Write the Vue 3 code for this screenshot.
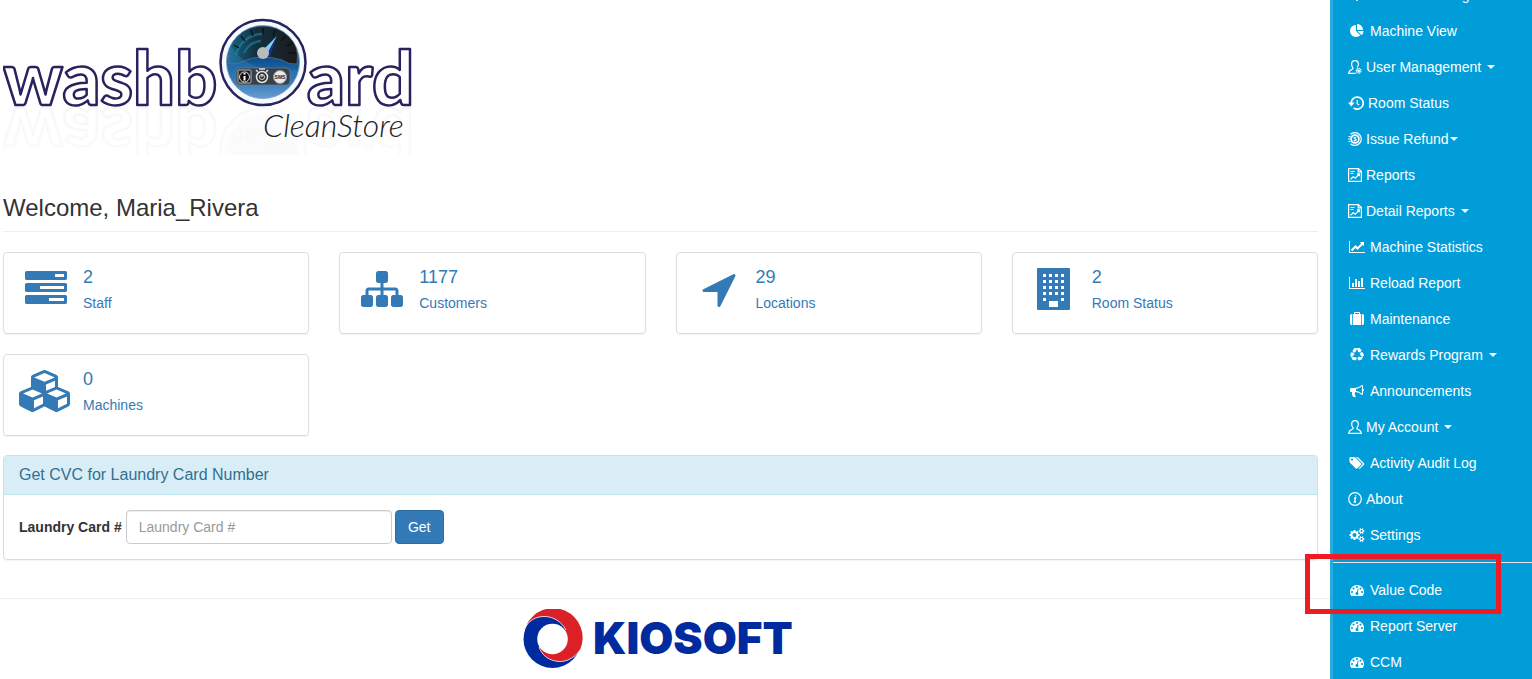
<script setup>
import { ref } from 'vue'

const cardNumber = ref('')

const stats = [
  { icon: 'tasks', value: '2', label: 'Staff' },
  { icon: 'sitemap', value: '1177', label: 'Customers' },
  { icon: 'arrow', value: '29', label: 'Locations' },
  { icon: 'building', value: '2', label: 'Room Status' },
  { icon: 'cubes', value: '0', label: 'Machines' },
]

const statIcons = {
  tasks: { box: '0 0 1792 1792', w: 42, d: 'M1024 1408h640v-128h-640v128zm-384-512h1024v-128h-1024v128zm640-512h384v-128h-384v128zm512 832v256q0 26-19 45t-45 19h-1664q-26 0-45-19t-19-45v-256q0-26 19-45t45-19h1664q26 0 45 19t19 45zm0-512v256q0 26-19 45t-45 19h-1664q-26 0-45-19t-19-45v-256q0-26 19-45t45-19h1664q26 0 45 19t19 45zm0-512v256q0 26-19 45t-45 19h-1664q-26 0-45-19t-19-45v-256q0-26 19-45t45-19h1664q26 0 45 19t19 45z' },
  sitemap: { box: '0 0 1792 1792', w: 42, d: 'M1792 1248v320q0 40-28 68t-68 28h-320q-40 0-68-28t-28-68v-320q0-40 28-68t68-28h96v-192h-512v192h96q40 0 68 28t28 68v320q0 40-28 68t-68 28h-320q-40 0-68-28t-28-68v-320q0-40 28-68t68-28h96v-192h-512v192h96q40 0 68 28t28 68v320q0 40-28 68t-68 28h-320q-40 0-68-28t-28-68v-320q0-40 28-68t68-28h96v-192q0-52 38-90t90-38h512v-192h-96q-40 0-68-28t-28-68v-320q0-40 28-68t68-28h320q40 0 68 28t28 68v320q0 40-28 68t-68 28h-96v192h512q52 0 90 38t38 90v192h96q40 0 68 28t28 68z' },
  arrow: { box: '0 0 1792 1792', w: 42, d: 'M1593 349l-640 1280q-17 35-57 35-5 0-15-2-22-5-35.500-22.500t-13.500-39.500v-576h-576q-22 0-39.500-13.500t-22.500-35.500 4-42 29-30l1280-640q13-7 29-7 27 0 45 19 15 14 18.500 34.500t-6.500 39.500z' },
  building: { box: '1 0 42 42', w: 42, d: 'M5 0h31q1 0 1 1v40q0 1-1 1H5q-1 0-1-1V1q0-1 1-1zM10 6v3h3v-3zM16 6v3h3v-3zM22 6v3h3v-3zM28 6v3h3v-3zM10 12v3h3v-3zM16 12v3h3v-3zM22 12v3h3v-3zM28 12v3h3v-3zM10 18v3h3v-3zM16 18v3h3v-3zM22 18v3h3v-3zM28 18v3h3v-3zM10 24v3h3v-3zM16 24v3h3v-3zM22 24v3h3v-3zM28 24v3h3v-3zM10 30v3h3v-3zM28 30v3h3v-3zM16 33v6h9v-6z' },
  cubes: { box: '0 0 2176 1792', w: 51, d: 'M640 1632l384-192v-314l-384 164v342zm-64-454l404-173-404-173-404 173zm1088 454l384-192v-314l-384 164v342zm-64-454l404-173-404-173-404 173zm-448-293l384-165v-266l-384 164v267zm-64-379l441-189-441-189-441 189zm1088 518v416q0 36-19 67t-52 47l-448 224q-25 14-57 14t-57-14l-448-224q-4-2-7-4-2 2-7 4l-448 224q-25 14-57 14t-57-14l-448-224q-33-16-52-47t-19-67v-416q0-38 21.500-70t56.500-48l434-186v-400q0-38 21.500-70t56.500-48l448-192q23-10 50-10t50 10l448 192q35 16 56.500 48t21.500 70v400l434 186q36 16 57 48t21 70z' },
}

const gauge = 'M384 1152q0-53-37.500-90.500t-90.500-37.500-90.500 37.500-37.500 90.500 37.500 90.500 90.500 37.500 90.500-37.500 37.500-90.500zm192-448q0-53-37.500-90.500t-90.500-37.500-90.500 37.500-37.500 90.500 37.500 90.500 90.500 37.500 90.500-37.500 37.500-90.500zm428 481l101-382q6-26-7.500-48.500t-38.500-29.500-48 6.500-30 39.500l-101 382q-60 5-107 43.500t-63 98.500q-20 77 20 146t117 89 146-20 89-117q16-60-6-117t-72-91zm660-33q0-53-37.500-90.500t-90.500-37.500-90.500 37.500-37.500 90.500 37.500 90.500 90.500 37.500 90.500-37.500 37.500-90.500zm-640-640q0-53-37.500-90.500t-90.500-37.500-90.500 37.500-37.500 90.500 37.500 90.500 90.500 37.500 90.500-37.500 37.500-90.500zm448 192q0-53-37.500-90.500t-90.500-37.500-90.500 37.500-37.500 90.500 37.500 90.500 90.500 37.500 90.500-37.500 37.500-90.500zm320 448q0 261-141 483-19 29-54 29h-1402q-35 0-54-29-141-221-141-483 0-182 71-348t191-286 286-191 348-71 348 71 286 191 191 286 71 348z'

// Solid glyphs, 1792 units tall; w is the glyph's width in the same units
const glyphs = {
  marker: { w: 1024, d: 'M768 640q0-106-75-181t-181-75-181 75-75 181 75 181 181 75 181-75 75-181zm256 0q0 109-33 179l-364 774q-16 33-47.500 52t-67.500 19-67.500-19-46.500-52l-365-774q-33-70-33-179 0-212 150-362t362-150 362 150 150 362z' },
  pie: { w: 1792, d: 'M768 890l546 546q-106 108-247.500 168t-298.500 60q-209 0-385.500-103t-279.500-279.500-103-385.500 103-385.500 279.500-279.500 385.500-103v762zm187 6h773q0 157-60 298.500t-168 247.500zm709-128h-768v-768q209 0 385.500 103t279.500 279.500 103 385.500z' },
  line: { w: 2048, d: 'M2048 1536v128h-2048v-1536h128v1408h1920zm-128-1248v435q0 21-19.500 29.500t-35.500-7.500l-121-121-633 633q-10 10-23 10t-23-10l-233-233-416 416-192-192 585-585q10-10 23-10t23 10l233 233 464-464-121-121q-16-16-7.500-35.500t29.500-19.500h435q14 0 23 9t9 23z' },
  bars: { w: 2048, d: 'M640 896v512h-256v-512h256zm384-512v1024h-256v-1024h256zm1024 1152v128h-2048v-1536h128v1408h1920zm-640-896v768h-256v-768h256zm384-384v1152h-256v-1152h256z' },
  suitcase: { w: 1792, d: 'M640 256h512v-128h-512v128zm-352 0v1408h-64q-92 0-158-66t-66-158v-960q0-92 66-158t158-66h64zm1120 0v1408h-1024v-1408h128v-160q0-40 28-68t68-28h576q40 0 68 28t28 68v160h128zm384 224v960q0 92-66 158t-158 66h-64v-1408h64q92 0 158 66t66 158z' },
  recycle: { w: 1792, d: 'M836 1169l-15 368-2 22-420-29q-36-3-67-31.500t-47-65.500q-11-27-14.500-55t4-65 12-55 21.500-64 19-53q78 12 509 28zm-387-586l180 379-147-92q-63 72-111.500 144.500t-72.500 125-39.500 94.500-18.500 63l-4 21-190-357q-17-26-18-56t6-47l8-18q35-63 114-188l-140-86zm1231 517l-188 359q-12 29-36.500 46.500t-43.500 20.500l-18 4q-71 7-219 12l8 164-230-367 211-362 7 173q170 16 283 5t170-33zm-785-924q-47 63-265 435l-317-187-19-12 225-356q20-31 60-45t80-10q24 2 48.500 12t42 21 41.500 33 36 34.500 36 39.500 32 35zm655 307l212 363q18 37 12.500 76t-27.500 74q-13 20-33 37t-38 28-48.500 22-47 16-51.500 14-46 12q-34-72-265-436l313-195zm-143-226l142-83-220 373-419-20 151-86q-34-89-75-166t-75.500-123.500-64.500-80-47-46.500l-17-13 405 1q31-3 58 10.500t39 28.500l11 15q39 61 112 190z' },
  bullhorn: { w: 1792, d: 'M1664 640q53 0 90.500 37.500t37.500 90.500-37.500 90.500-90.500 37.500v384q0 52-38 90t-90 38q-417-347-812-380-58 19-91 66t-31 100.500 40 92.500q-20 33-23 65.500t6 58 33.500 55 48 50 61.500 50.500q-29 58-111.500 83t-168.500 11.500-132-55.500q-7-23-29.500-87.500t-32-94.500-23-89-15-101 3.500-98.500 22-110.500h-122q-66 0-113-47t-47-113v-192q0-66 47-113t113-47h480q435 0 896-384 52 0 90 38t38 90v384zm-128 604v-954q-394 302-768 343v270q377 42 768 341z' },
  tags: { w: 1920, d: 'M448 448q0-53-37.500-90.500t-90.500-37.500-90.500 37.500-37.500 90.500 37.500 90.500 90.500 37.500 90.500-37.500 37.500-90.500zm1067 576q0 53-37 90l-491 492q-39 37-91 37-53 0-90-37l-715-716q-38-37-64.500-101t-26.500-117v-416q0-52 38-90t90-38h416q53 0 117 26.500t102 64.500l715 714q37 39 37 91zm384 0q0 53-37 90l-491 492q-39 37-91 37-36 0-59-14t-53-45l470-470q37-37 37-90 0-52-37-91l-715-714q-38-38-102-64.500t-117-26.500h224q53 0 117 26.500t102 64.500l715 714q37 39 37 91z' },
  cogs: { w: 1920, d: 'M896 896q0-106-75-181t-181-75-181 75-75 181 75 181 181 75 181-75 75-181zm768 512q0-52-38-90t-90-38-90 38-38 90q0 53 37.500 90.500t90.500 37.500 90.500-37.500 37.500-90.500zm0-1024q0-52-38-90t-90-38-90 38-38 90q0 53 37.500 90.500t90.500 37.500 90.500-37.500 37.500-90.500zm-384 421v185q0 10-7 19.500t-16 10.500l-155 24q-11 35-32 76 34 48 90 115 7 11 7 20 0 12-7 19-23 30-82.500 89.500t-78.500 59.500q-11 0-21-7l-115-90q-37 19-77 31-11 108-23 155-7 24-30 24h-186q-11 0-20-7.500t-10-17.500l-23-153q-34-10-75-31l-118 89q-7 7-20 7-11 0-21-8-144-133-144-160 0-9 7-19 10-14 41-53t47-61q-23-44-35-82l-152-24q-10-1-17-9.500t-7-19.500v-185q0-10 7-19.500t16-10.500l155-24q11-35 32-76-34-48-90-115-7-11-7-20 0-12 7-20 22-30 82-89t79-59q11 0 21 7l115 90q34-18 77-32 11-108 23-154 7-24 30-24h186q11 0 20 7.500t10 17.500l23 153q34 10 75 31l118-89q8-7 20-7 11 0 21 8 144 133 144 160 0 8-7 19-12 16-42 54t-45 60q23 48 34 82l152 23q10 2 17 10.500t7 19.500zm640 533v140q0 16-149 31-12 27-30 52 51 113 51 138 0 4-4 7-122 71-124 71-8 0-46-47t-52-68q-20 2-30 2t-30-2q-14 21-52 68t-46 47q-2 0-124-71-4-3-4-7 0-25 51-138-18-25-30-52-149-15-149-31v-140q0-16 149-31 13-29 30-52-51-113-51-138 0-4 4-7 4-2 35-20t59-34 30-16q8 0 46 46.500t52 67.500q20-2 30-2t30 2q51-71 92-112l6-2q4 0 124 70 4 3 4 7 0 25-51 138 17 23 30 52 149 15 149 31zm0-1024v140q0 16-149 31-12 27-30 52 51 113 51 138 0 4-4 7-122 71-124 71-8 0-46-47t-52-68q-20 2-30 2t-30-2q-14 21-52 68t-46 47q-2 0-124-71-4-3-4-7 0-25 51-138-18-25-30-52-149-15-149-31v-140q0-16 149-31 13-29 30-52-51-113-51-138 0-4 4-7 4-2 35-20t59-34 30-16q8 0 46 46.500t52 67.500q20-2 30-2t30 2q51-71 92-112l6-2q4 0 124 70 4 3 4 7 0 25-51 138 17 23 30 52 149 15 149 31z' },
  gauge: { w: 1792, d: gauge },
}

const mainMenu = [
  { glyph: 'marker', label: 'Location Management' },
  { glyph: 'pie', label: 'Machine View' },
  { line: 'userCog', label: 'User Management', caret: true },
  { line: 'history', label: 'Room Status' },
  { line: 'refund', label: 'Issue Refund', caret: true, tight: true },
  { line: 'report', label: 'Reports' },
  { line: 'report', label: 'Detail Reports', caret: true },
  { glyph: 'line', label: 'Machine Statistics' },
  { glyph: 'bars', label: 'Reload Report' },
  { glyph: 'suitcase', label: 'Maintenance' },
  { glyph: 'recycle', label: 'Rewards Program', caret: true },
  { glyph: 'bullhorn', label: 'Announcements' },
  { line: 'user', label: 'My Account', caret: true },
  { glyph: 'tags', label: 'Activity Audit Log' },
  { line: 'info', label: 'About' },
  { glyph: 'cogs', label: 'Settings' },
]

const serverMenu = [
  { glyph: 'gauge', label: 'Value Code', marked: true },
  { glyph: 'gauge', label: 'Report Server' },
  { glyph: 'gauge', label: 'CCM' },
]

const groups = [mainMenu, serverMenu]
</script>

<template>
  <div class="page">
    <main class="content">
      <div class="inner">
        <svg class="brand" width="420" height="160" viewBox="3 0 420 160" role="img" aria-label="washboard CleanStore">
          <defs>
            <linearGradient id="dial" x1="0" y1="0" x2="0" y2="1">
              <stop offset="0" stop-color="#123f68" />
              <stop offset=".45" stop-color="#0b4f8c" />
              <stop offset=".75" stop-color="#2f74b5" />
              <stop offset="1" stop-color="#7fa9d8" />
            </linearGradient>
            <linearGradient id="face" x1="0" y1="0" x2="1" y2="0">
              <stop offset="0" stop-color="#17668a" />
              <stop offset=".4" stop-color="#12303f" />
              <stop offset="1" stop-color="#1c1a1c" />
            </linearGradient>
            <linearGradient id="fade" x1="0" y1="0" x2="0" y2="1">
              <stop offset="0" stop-color="#fff" stop-opacity=".2" />
              <stop offset="1" stop-color="#fff" stop-opacity=".5" />
            </linearGradient>
            <clipPath id="below"><rect x="0" y="107" width="430" height="48" /></clipPath>
            <clipPath id="disc"><circle cx="263" cy="62" r="36" /></clipPath>
          </defs>
          <g id="wordmark">
            <text class="word" x="3" y="105">washb</text>
            <text class="word" x="307" y="105">ard</text>
            <circle cx="263" cy="62.500" r="42.500" fill="#f4fbfe" stroke="#28225f" stroke-width="2.500" />
            <circle cx="263" cy="62" r="36.500" fill="url(#dial)" stroke="#8aa0c4" />
            <g clip-path="url(#disc)">
              <path d="M229 64Q226 44 238 34Q250 26 263 26Q277 26 288 35Q300 45 297 64Q289 65 282 60Q272 57 263 57Q252 57 244 61Q236 65 229 64z" fill="url(#face)" stroke="#5c7486" stroke-width=".8" />
              <path d="M236 55A27 27 0 0 1 262 34M244 53A20 20 0 0 1 261 41" fill="none" stroke="#23859f" stroke-width="2.500" opacity=".6" />
              <path d="M263 28v6M251 30l2 6M241 36l4 5M234 45l5 3M275 30l-2 6M286 36l-5 5M293 43l-6 3M296 53l-7 0" stroke="#0a1016" stroke-width="1.300" />
              <path d="M226 36Q236 62 262 68L298 70V110H220z" fill="#3a86c4" opacity=".35" />
            </g>
            <path d="M277 36L262 51 266 56z" fill="#7fd0f4" />
            <path d="M277 36L266 56 270 57z" fill="#1b2f8e" />
            <circle cx="263" cy="53" r="6" fill="#b9bcbd" />
            <rect x="236" y="68" width="54" height="17" rx="4" fill="#37414b" stroke="#6f8292" stroke-width=".7" />
            <rect x="238" y="70" width="13" height="13" rx="1" fill="#222" stroke="#adb5bb" />
            <circle cx="244.500" cy="77" r="5" fill="#111" stroke="#ddd" />
            <path d="M244.500 73v1.500M244.500 76v4.500" stroke="#fff" stroke-width="2" />
            <circle cx="262" cy="77" r="5.500" fill="#333" stroke="#e5e5e5" stroke-width="1.500" />
            <path d="M259 69h6M256 70l2 2M268 70l-2 2" stroke="#ddd" stroke-width="1.500" />
            <circle cx="262" cy="77" r="2.500" fill="none" stroke="#ddd" />
            <path d="M262 74v3" stroke="#fff" />
            <circle cx="280" cy="77" r="6.500" fill="#e9e9e9" stroke="#999" />
            <text class="sms" x="280" y="79">SMS</text>
          </g>
          <g clip-path="url(#below)">
            <use href="#wordmark" transform="translate(0 213) scale(1 -1)" opacity=".035" />
            <rect x="0" y="107" width="430" height="48" fill="url(#fade)" />
          </g>
          <text class="sub" x="263" y="137">CleanStore</text>
        </svg>

        <h1 class="welcome">Welcome, Maria_Rivera</h1>

        <div class="cards">
          <a v-for="s in stats" :key="s.label" class="card" href="#">
            <span class="card-icon" :class="{ start: s.icon === 'cubes' }">
              <svg :width="statIcons[s.icon].w" height="42" :viewBox="statIcons[s.icon].box" aria-hidden="true">
                <path :d="statIcons[s.icon].d" fill="currentColor" fill-rule="evenodd" />
              </svg>
            </span>
            <span class="card-text">
              <span class="value">{{ s.value }}</span>
              <span>{{ s.label }}</span>
            </span>
          </a>
        </div>

        <section class="panel">
          <h2 class="panel-title">Get CVC for Laundry Card Number</h2>
          <form class="panel-body" @submit.prevent>
            <label for="card-number">Laundry Card #</label>
            <input id="card-number" v-model="cardNumber" type="text" placeholder="Laundry Card #" />
            <button type="submit">Get</button>
          </form>
        </section>
      </div>

      <footer class="footer">
        <svg width="276" height="60" viewBox="0 0 276 60" role="img" aria-label="KIOSOFT">
          <circle cx="29.500" cy="30" r="29" fill="#002b9f" />
          <path d="M3.200 16.500A29.500 29.500 0 0 1 57 41C51 49.500 43 52.800 36 52.500C27 52 19 47 16 38L43 21C38 12 30 7.500 21 7.500C13 7.500 7 11.500 3.200 16.500z" fill="#db2127" />
          <path d="M43 21C38 12 30 7.500 21 7.500C13 7.500 7 11.500 3.200 16.500M57 41C51 49.500 43 52.800 36 52.500C27 52 19 47 16 38" fill="none" stroke="#fff" stroke-width=".8" />
          <circle cx="29.500" cy="30" r="15.300" fill="#fff" />
          <text class="kio" x="70" y="45">KIOSOFT</text>
        </svg>
      </footer>
    </main>

    <nav class="sidebar" aria-label="Main menu">
      <ul v-for="(group, g) in groups" :key="g" class="menu">
        <li v-for="item in group" :key="item.label" class="item">
          <a href="#">
            <svg v-if="item.glyph" class="glyph" height="14" :viewBox="`${(glyphs[item.glyph].w - 2304) / 2} 0 2304 1792`" aria-hidden="true">
              <path :d="glyphs[item.glyph].d" fill="currentColor" />
            </svg>
            <svg v-else-if="item.line === 'history'" class="drawn history" viewBox="0 0 16 14" aria-hidden="true">
              <path d="M3.200 7.500A6 6 0 1 1 5.700 12" stroke-width="1.700" />
              <path d="M0 6.500h6.600L3.300 10.500z" fill="currentColor" stroke="none" />
              <path d="M9.200 4v3.700l2 1.200" stroke-width="1.200" />
            </svg>
            <svg v-else class="drawn" viewBox="0 0 14 14" aria-hidden="true">
              <template v-if="item.line === 'userCog'">
                <path d="M7 .7C4.800.7 3.600 2.200 3.600 4.200S5 8 5 8.500C5 9.600.8 9.500.7 13.300h7M7 .7c2.200 0 3.400 1.500 3.400 3.500 0 1.500-.8 2.600-1.200 3.300" />
                <circle cx="10.700" cy="10.800" r="2.300" stroke-dasharray="1.200 .4" />
                <circle cx="10.700" cy="10.800" r=".8" />
              </template>
              <template v-else-if="item.line === 'user'">
                <path d="M7 .7C4.800.7 3.700 2.200 3.700 4.200c0 1.700 1 3 1.500 3.900.5 1.800-4.200 1-4.500 5.200h12.600c-.3-4.200-5-3.400-4.500-5.200.5-.9 1.500-2.200 1.500-3.900C10.300 2.200 9.200.7 7 .7z" />
              </template>
              <template v-else-if="item.line === 'refund'">
                <circle cx="7" cy="7" r="3.900" stroke-width="1.800" />
                <path d="M2.500 2.300A6.400 6.400 0 1 1 2.500 11.700M.5 4.500h2M0 7h2M.5 9.500h2" />
                <path d="M8.200 5.700C7.500 5 5.900 5.200 6.100 6.200 6.300 7 8.200 6.900 8.100 7.900 8 8.900 6.500 8.900 5.800 8.300" />
              </template>
              <template v-else-if="item.line === 'report'">
                <path d="M.6.6h9.800l3 3v9.800H.6z" />
                <path d="M10.200.6v3.200h3.200M2.500 3.500h4M2.500 5.500h3" />
                <path d="M2.500 11.300l2.700-2.500 2 1.300 4-4M9 6h2.300v2.300" stroke-width="1.300" />
              </template>
              <template v-else>
                <circle cx="7" cy="7" r="6.300" />
                <path d="M6 6h1.500L6.500 10H8M7.700 3.300v1.200" stroke-width="1.400" />
              </template>
            </svg>
            <span>{{ item.label }}</span>
            <i v-if="item.caret" class="caret" :class="{ tight: item.tight }"></i>
          </a>
          <span v-if="item.marked" class="marker"></span>
        </li>
      </ul>
    </nav>
  </div>
</template>

<style>
body {
  margin: 0;
  background: #fff;
}
</style>

<style scoped>
.page {
  display: flex;
  height: 100vh;
  overflow: hidden;
  font-family: "Liberation Sans", Arial, sans-serif;
  font-size: 14px;
  line-height: 20px;
  color: #333;
}

.page * {
  box-sizing: border-box;
}

.content {
  flex: 1;
  min-width: 0;
}

.inner {
  padding: 0 12px 38px 3px;
}

.brand {
  display: block;
}

.word {
  font: 900 74px Lato, sans-serif;
  fill: #fff;
  stroke: #28225f;
  stroke-width: 2.5px;
  stroke-linejoin: round;
}

.sub {
  font: italic 300 32px Lato, sans-serif;
  fill: #222;
}

.sms {
  font: 700 5px "Liberation Sans", sans-serif;
  fill: #222;
  text-anchor: middle;
}

.welcome {
  margin: 35px 0 20px;
  padding-bottom: 10px;
  border-bottom: 1px solid #eee;
  font-size: 24px;
  font-weight: 400;
  line-height: 26px;
}

.cards {
  display: grid;
  grid-template-columns: repeat(4, 1fr);
  gap: 20px 30px;
}

.card {
  display: flex;
  gap: 10px;
  height: 82px;
  padding: 15px;
  border: 1px solid #ddd;
  border-radius: 4px;
  box-shadow: 0 1px 1px rgba(0, 0, 0, 0.05);
  color: #337ab7;
  text-decoration: none;
}

.card-icon {
  display: flex;
  justify-content: center;
  width: 54px;
}

.card-icon.start {
  justify-content: flex-start;
}

.card-text {
  display: flex;
  flex-direction: column;
  gap: 7px;
}

.value {
  font-size: 18px;
  line-height: 18px;
}

.panel {
  margin-top: 19px;
  border: 1px solid #bce8f1;
  border-radius: 4px;
  box-shadow: 0 1px 1px rgba(0, 0, 0, 0.05);
}

.panel-title {
  margin: 0;
  padding: 9px 15px;
  border-bottom: 1px solid #bce8f1;
  border-radius: 3px 3px 0 0;
  background: #d9edf7;
  color: #31708f;
  font-size: 16px;
  font-weight: 400;
}

.panel-body {
  display: flex;
  align-items: center;
  padding: 15px;
}

.panel-body label {
  margin-right: 4px;
  font-weight: 700;
}

.panel-body input {
  width: 266px;
  height: 34px;
  margin-right: 3px;
  padding: 6px 12px;
  border: 1px solid #ccc;
  border-radius: 4px;
  box-shadow: inset 0 1px 1px rgba(0, 0, 0, 0.075);
  font: inherit;
  color: #555;
}

.panel-body input::placeholder {
  color: #999;
}

.panel-body button {
  min-width: 49px;
  height: 34px;
  padding: 6px 12px;
  border: 1px solid #2e6da4;
  border-radius: 4px;
  background: #337ab7;
  color: #fff;
  font: inherit;
}

.footer {
  display: flex;
  justify-content: center;
  padding: 10px 12px 10px 3px;
  border-top: 1px solid #eee;
}

.kio {
  font: 900 44px Inter, sans-serif;
  fill: #002b9f;
}

.sidebar {
  width: 202px;
  flex: none;
  border-left: 3px solid #27aadd;
  background: #009dd9;
  color: #fff;
}

.menu {
  margin: 0;
  padding: 0;
  list-style: none;
}

/* The list is scrolled so that its first entry is mostly out of view */
.menu:first-child {
  margin-top: -23px;
}

.menu + .menu {
  margin-top: 9px;
  padding-top: 9px;
  border-top: 1px solid #e5e5e5;
}

.item {
  position: relative;
}

.item a {
  display: flex;
  align-items: center;
  gap: 4px;
  padding: 8px 15px;
  color: #fff;
  text-decoration: none;
  white-space: nowrap;
}

.glyph {
  width: 18px;
  flex: none;
}

.drawn {
  width: 14px;
  height: 14px;
  flex: none;
  fill: none;
  stroke: currentColor;
  stroke-width: 1.2px;
}

.drawn.history {
  width: 16px;
}

.caret {
  margin-left: 2px;
  border-top: 4px solid #fff;
  border-right: 4px solid transparent;
  border-left: 4px solid transparent;
}

.caret.tight {
  margin-left: -3px;
}

.marker {
  position: absolute;
  top: -18px;
  left: -28px;
  width: 196px;
  height: 60px;
  border: 5px solid #ed1c24;
  pointer-events: none;
}
</style>
